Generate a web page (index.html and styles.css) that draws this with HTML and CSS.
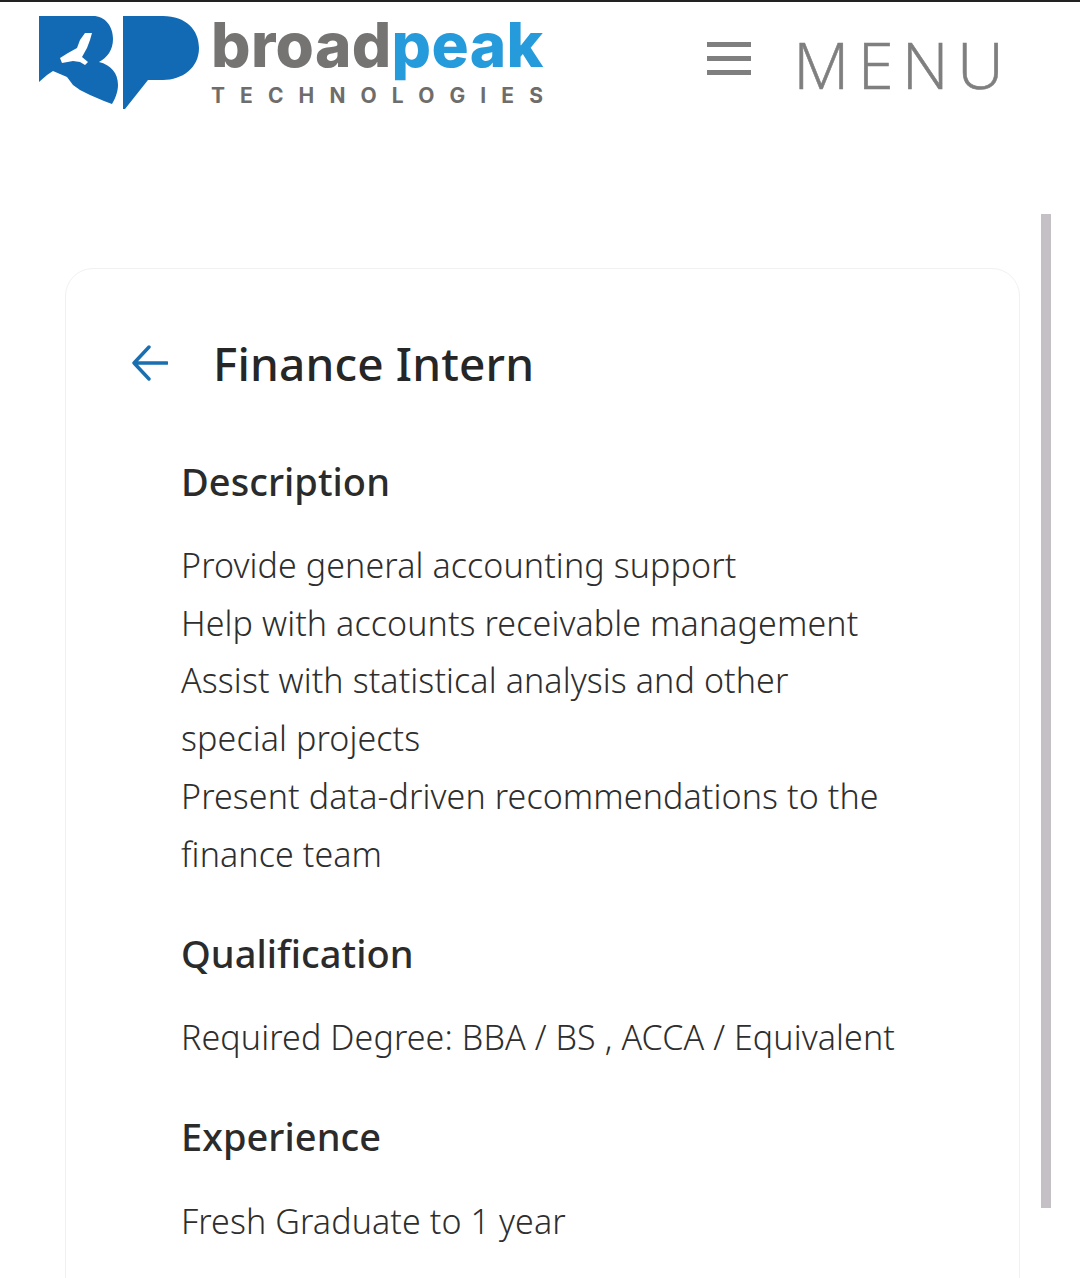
FILE: index.html
```html
<!DOCTYPE html>
<html lang="en">
<head>
<meta charset="utf-8">
<title>Finance Intern</title>
<link rel="stylesheet" href="styles.css">
</head>
<body>
<div class="page">
  <header class="header">
    <a class="logo">
      <svg class="logo-mark" viewBox="0 0 162 96" aria-hidden="true">
        <path class="mark-blue" d="M0 1H54C66 1 74 11 74 24C74 35 68 43 60 47C72 50 79 58 79 70C79 77 76 84 73 89L65 86L51 80L41 75L34 70L28 62L14 56L8 60L0 67Z"/>
        <path class="mark-white" d="M53 18L46 18L41 25L38 33L29 38L21 43L23 48L34 46L41 47L46 50L49 47L43 42L48 33L51 25Z"/>
        <path class="mark-blue" d="M84 1H124C147 1 160 15 160 33C160 53 143 65 124 65H109L86 94H84Z"/>
      </svg>
      <div class="logo-text">
        <div class="wordmark"><span class="word-gray">broad</span><span class="word-blue">peak</span></div>
        <div class="tagline">TECHNOLOGIES</div>
      </div>
    </a>
    <div class="menu">
      <span class="burger"><i></i><i></i><i></i></span>
      <span class="menu-label">MENU</span>
    </div>
  </header>
  <main class="card">
    <div class="title-row">
      <svg class="back" viewBox="0 0 36 36" aria-hidden="true"><path d="M35 18H2M17 2L2 18L17 34"/></svg>
      <h1>Finance Intern</h1>
    </div>
    <section class="details">
      <h2>Description</h2>
      <p>Provide general accounting support<br>Help with accounts receivable management<br>Assist with statistical analysis and other special projects<br>Present data-driven recommendations to the finance team</p>
      <h2>Qualification</h2>
      <p>Required Degree: BBA / BS , ACCA / Equivalent</p>
      <h2>Experience</h2>
      <p class="last">Fresh Graduate to 1 year</p>
    </section>
  </main>
  <div class="scrollbar"></div>
</div>
</body>
</html>
```
FILE: styles.css
```css
* { box-sizing: border-box; }
html, body { margin: 0; height: 100%; overflow: hidden; background: #fff; }
body { font-family: "Noto Sans", "Liberation Sans", sans-serif; color: #2b2b2b; }
.page { position: relative; width: 1080px; height: 1278px; overflow: hidden; border-top: 2px solid #222; }
.header { display: flex; justify-content: space-between; padding: 13px 68px 0 39px; height: 266px; }
.logo { display: flex; gap: 10px; height: 96px; }
.logo-mark { width: 162px; height: 96px; flex: none; }
.mark-blue { fill: #126ab5; }
.mark-white { fill: #fff; }
.logo-text { display: flex; flex-direction: column; }
.wordmark { font: 800 62px/60px Inter, sans-serif; letter-spacing: 0.35px; white-space: nowrap; }
.word-gray { color: #767473; }
.word-blue { color: #269bdc; }
.tagline { font: 700 21px/26px Inter, sans-serif; color: #6f6d6c; letter-spacing: 15.1px; white-space: nowrap; margin-top: 8px; }
.menu { display: flex; gap: 42px; height: 80px; align-items: center; margin-top: 9px; }
.burger { display: flex; flex-direction: column; gap: 9px; width: 44px; margin-top: -11px; }
.burger i { display: block; height: 5px; background: #7f7f7f; }
.menu-label { font: 300 65px/80px "Open Sans", sans-serif; color: #7f7f7f; letter-spacing: 8.25px; -webkit-text-stroke: 0.6px #7f7f7f; }
.card { margin-left: 65px; width: 955px; height: 1100px; border: 1px solid #f1f1f1; border-radius: 28px; padding: 66px 60px 0 66px; }
.title-row { display: flex; align-items: center; gap: 45px; height: 56px; }
.back { width: 36px; height: 36px; flex: none; }
.back path { fill: none; stroke: #1a6fb0; stroke-width: 3.4; stroke-linecap: round; stroke-linejoin: round; }
h1 { margin: 0; font-size: 46px; line-height: 56px; font-weight: 500; color: #262626; letter-spacing: 0.15px; }
.details { padding-left: 49px; margin-top: 61px; width: 765px; }
h2 { margin: 0; font-size: 38px; line-height: 58px; font-weight: 500; color: #2b2b2b; letter-spacing: 0.05px; }
p { margin: 27px 0 40.5px; font-size: 34px; line-height: 57.7px; font-weight: 350; color: #2e2e2e; letter-spacing: 0.1px; }
p.last { margin-top: 28px; }
.scrollbar { position: absolute; left: 1041px; top: 212px; width: 10px; height: 994px; background: #c4c0c6; }
```
